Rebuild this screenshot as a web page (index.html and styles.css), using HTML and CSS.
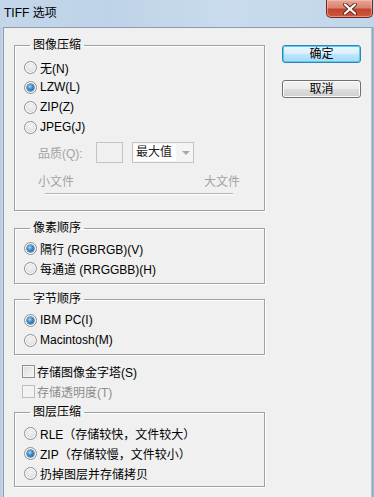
FILE: index.html
```html
<!DOCTYPE html>
<html>
<head>
<meta charset="utf-8">
<title>TIFF 选项</title>
<link rel="stylesheet" href="styles.css">
</head>
<body>
<div class="window">
  <div class="titlebar">
    <span class="title">TIFF 选项</span>
    <div class="close">
      <svg width="16" height="12" viewBox="0 0 16 12">
        <path d="M3 1.5 L13 10.5 M13 1.5 L3 10.5" stroke="#5a2a22" stroke-width="4" stroke-linecap="round" fill="none"/>
        <path d="M3 1.5 L13 10.5 M13 1.5 L3 10.5" stroke="#ffffff" stroke-width="2.2" stroke-linecap="round" fill="none"/>
      </svg>
    </div>
  </div>
  <div class="client">
    <div class="main">
      <fieldset class="group g1">
        <legend>图像压缩</legend>
        <div class="opt"><span class="radio"></span>无(N)</div>
        <div class="opt"><span class="radio on"></span>LZW(L)</div>
        <div class="opt"><span class="radio"></span>ZIP(Z)</div>
        <div class="opt"><span class="radio"></span>JPEG(J)</div>
        <div class="quality">
          <span class="qlabel">品质(Q):</span>
          <span class="qbox"></span>
          <span class="select"><span class="sel-text">最大值</span><span class="sel-arrow"></span></span>
        </div>
        <div class="size-labels"><span>小文件</span><span>大文件</span></div>
        <div class="slider"></div>
      </fieldset>

      <fieldset class="group g2">
        <legend>像素顺序</legend>
        <div class="opt"><span class="radio on"></span>隔行 (RGBRGB)(V)</div>
        <div class="opt"><span class="radio"></span>每通道 (RRGGBB)(H)</div>
      </fieldset>

      <fieldset class="group g3">
        <legend>字节顺序</legend>
        <div class="opt"><span class="radio on"></span>IBM PC(I)</div>
        <div class="opt"><span class="radio"></span>Macintosh(M)</div>
      </fieldset>

      <div class="checks">
        <div class="chk"><span class="box"></span>存储图像金字塔(S)</div>
        <div class="chk disabled"><span class="box"></span>存储透明度(T)</div>
      </div>

      <fieldset class="group g4">
        <legend>图层压缩</legend>
        <div class="opt"><span class="radio"></span>RLE（存储较快，文件较大）</div>
        <div class="opt"><span class="radio on"></span>ZIP（存储较慢，文件较小）</div>
        <div class="opt"><span class="radio"></span>扔掉图层并存储拷贝</div>
      </fieldset>
    </div>
    <div class="side">
      <button class="btn default">确定</button>
      <button class="btn">取消</button>
    </div>
  </div>
</div>
</body>
</html>
```

FILE: styles.css
```css
html, body {
  margin: 0;
  padding: 0;
}
body {
  width: 374px;
  height: 497px;
  overflow: hidden;
  font-family: "Liberation Sans", "Noto Sans CJK SC", sans-serif;
  font-size: 12px;
  color: #000;
}
.window {
  width: 374px;
  height: 497px;
  background: linear-gradient(90deg, #b7cbe0 0px, #c6d8ea 3px, #c6d8ea 371px, #7f9fc4 372px, #aac3dc 374px);
  display: flex;
  flex-direction: column;
}
.titlebar {
  height: 27px;
  flex: none;
  display: flex;
  justify-content: space-between;
  align-items: flex-start;
  background: linear-gradient(90deg, #c3d6ea 0%, #bfd3e8 30%, #c9dbed 60%, #c2d6ea 100%);
}
.title {
  margin-top: 5px;
  padding-left: 4px;
  line-height: 16px;
  font-size: 12px;
  color: #000;
}
.close {
  width: 45px;
  height: 17px;
  margin-right: 1px;
  border: 1px solid #6b2a22;
  border-top: none;
  border-radius: 0 0 5px 5px;
  background: linear-gradient(180deg, #e8a696 0%, #d98470 45%, #c4442d 55%, #d0583f 100%);
  box-shadow: inset 0 0 0 1px rgba(255, 200, 190, 0.5);
  display: flex;
  align-items: center;
  justify-content: center;
}
.client {
  flex: 1;
  margin-left: 3px;
  width: 369px;
  box-sizing: border-box;
  border-top: 1px solid #8a9bb0;
  border-left: 1px solid #8a9bb0;
  border-right: 1px solid #b7c4d2;
  background: #f0f0f0;
  display: flex;
  padding: 9px 0 0 10px;
}
.main {
  width: 251px;
  flex: none;
  display: flex;
  flex-direction: column;
}
.group {
  margin: 0;
  padding: 0;
  min-width: 0;
  width: 251px;
  box-sizing: border-box;
  border: 1px solid #a0a0a0;
  box-shadow: inset 1px 1px 0 #ffffff, 1px 1px 0 #ffffff;
}
.group legend {
  margin-left: 15px;
  padding: 0 3px;
  line-height: 16px;
  height: 16px;
}
.opt {
  height: 20px;
  display: flex;
  align-items: center;
  padding-left: 9px;
  white-space: nowrap;
}
.radio {
  width: 13px;
  height: 13px;
  box-sizing: border-box;
  border-radius: 50%;
  border: 1px solid #8e8f8f;
  background: radial-gradient(circle at 50% 40%, #f4f4f4 0%, #e2e2e2 55%, #d0d0d0 100%);
  box-shadow: inset 0 0 0 1px #ffffff;
  margin-right: 3px;
  flex: none;
  position: relative;
}
.radio.on::after {
  content: "";
  position: absolute;
  left: 2px;
  top: 2px;
  width: 7px;
  height: 7px;
  border-radius: 50%;
  background: radial-gradient(circle at 40% 35%, #a9dcf8 0%, #3d8fd0 40%, #1b5c9a 100%);
  box-shadow: 0 0 0 0.5px #1d4f7e;
}
.g1 { padding-bottom: 15px; }
.g1 .opt:first-of-type { margin-top: 4px; }
.quality {
  margin-top: 5px;
  height: 21px;
  display: flex;
  align-items: center;
  padding-left: 23px;
  color: #a3a3a3;
}
.qlabel {
  width: 58px;
  flex: none;
}
.qbox {
  width: 27px;
  height: 21px;
  box-sizing: border-box;
  border: 1px solid #c4c4c4;
  background: #f0f0f0;
  flex: none;
}
.select {
  margin-left: 9px;
  width: 62px;
  height: 21px;
  box-sizing: border-box;
  border: 1px solid #c4c4c4;
  background: #f4f4f4;
  display: flex;
  align-items: center;
  flex: none;
}
.sel-text {
  width: 42px;
  height: 17px;
  margin-left: 1px;
  background: #ffffff;
  color: #222;
  line-height: 17px;
  padding-left: 2px;
  box-sizing: border-box;
}
.sel-arrow {
  margin-left: 6px;
  width: 0;
  height: 0;
  border-left: 4px solid transparent;
  border-right: 4px solid transparent;
  border-top: 4px solid #a8a8a8;
}
.size-labels {
  margin-top: 11px;
  line-height: 16px;
  display: flex;
  justify-content: space-between;
  padding: 0 24px 0 23px;
  color: #a3a3a3;
}
.slider {
  margin: 3px 0 0 30px;
  width: 188px;
  height: 1px;
  background: #b4b4b4;
  border-bottom: 1px solid #ffffff;
}
.g2 { margin-top: 9px; padding-top: 2px; padding-bottom: 5px; }
.g3 { margin-top: 7px; padding-top: 3px; padding-bottom: 4px; }
.g4 { margin-top: 3px; padding-top: 3px; padding-bottom: 3px; }
.checks {
  margin-top: 6px;
  padding-left: 8px;
}
.chk {
  height: 20px;
  display: flex;
  align-items: center;
  white-space: nowrap;
}
.box {
  width: 13px;
  height: 13px;
  box-sizing: border-box;
  border: 1px solid #8e8f8f;
  background: linear-gradient(135deg, #dcdcdc 0%, #f6f6f6 100%);
  box-shadow: inset 0 0 0 1px #f4f4f4;
  margin-right: 2px;
  flex: none;
}
.chk.disabled { color: #8d8d8d; }
.chk.disabled .box {
  border-color: #bcbcbc;
  background: #f2f2f2;
}
.side {
  margin-left: 17px;
  padding-top: 8px;
  display: flex;
  flex-direction: column;
}
.btn {
  width: 79px;
  height: 18px;
  margin: 0;
  padding: 0;
  box-sizing: border-box;
  font-family: "Liberation Sans", "Noto Sans CJK SC", sans-serif;
  font-size: 12px;
  line-height: 16px;
  color: #000;
  border: 1px solid #707070;
  border-radius: 3px;
  background: linear-gradient(180deg, #f2f2f2 0%, #ebebeb 48%, #dddddd 52%, #cfcfcf 100%);
  box-shadow: inset 0 0 0 1px #fcfcfc;
}
.btn + .btn { margin-top: 17px; }
.btn.default {
  border-color: #3c7fb1;
  background: linear-gradient(180deg, #eaf6fd 0%, #d9f0fc 48%, #bee6fd 52%, #a7d9f5 100%);
  box-shadow: inset 0 0 0 1px #48d3f5;
}
```
